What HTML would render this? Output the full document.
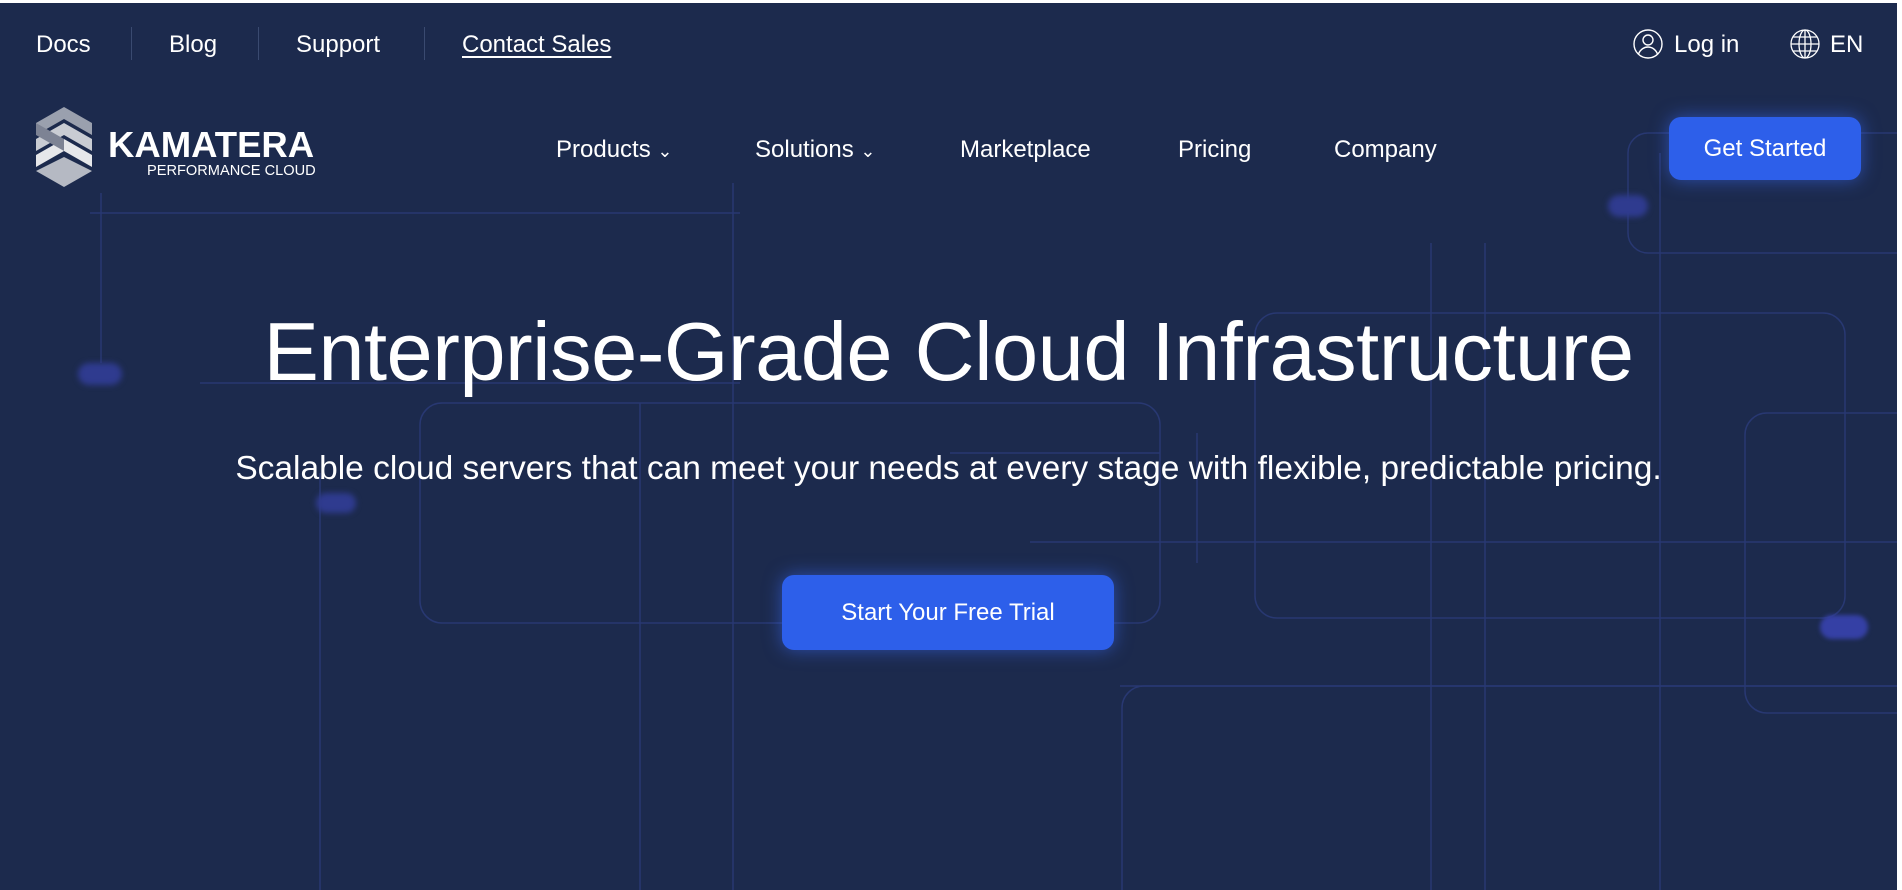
<!DOCTYPE html>
<html><head><meta charset="utf-8"><style>
html,body{margin:0;padding:0;overflow:hidden;width:1902px;height:890px;}
body{background:#fff;font-family:"Liberation Sans",sans-serif;color:#fff;position:relative;}
#bg{position:absolute;left:0;top:3px;width:1897px;height:887px;background:#1c2a4d;overflow:hidden;}
.a{position:absolute;white-space:nowrap;}
.top{font-size:24px;top:31px;}
.sep{position:absolute;top:27px;width:1px;height:33px;background:#3a4a70;}
.nav{font-size:24px;top:136px;}
.btn{position:absolute;background:#2d5fea;border-radius:12px;color:#fff;text-align:center;box-shadow:0 0 18px rgba(60,110,255,.55);}
</style></head><body>
<div id="bg">
<svg width="1897" height="887" style="position:absolute;left:0;top:0" fill="none" stroke="#2c3c7c" stroke-width="1.5" opacity=".8">
<path d="M101 190V360M733 180V887M1431 240V887M1485 240V887M1660 150V887M320 470V887M640 400V887"/>
<path d="M1030 539H1897M1120 683H1897M90 210H740M200 380H740"/>
<rect x="1255" y="310" width="590" height="305" rx="22"/>
<rect x="1745" y="410" width="240" height="300" rx="22"/>
<rect x="1122" y="683" width="900" height="400" rx="22"/>
<rect x="1628" y="130" width="300" height="120" rx="20"/>
<rect x="420" y="400" width="740" height="220" rx="22"/>
<path d="M1197 430V560M950 450H1160"/>
</svg>
<div style="position:absolute;left:78px;top:360px;width:44px;height:22px;border-radius:12px;background:#2f3b8f;filter:blur(3px)"></div>
<div style="position:absolute;left:316px;top:490px;width:40px;height:20px;border-radius:12px;background:#2f3b8f;filter:blur(3px)"></div>
<div style="position:absolute;left:1820px;top:612px;width:48px;height:24px;border-radius:12px;background:#3540a5;filter:blur(2px)"></div>
<div style="position:absolute;left:1608px;top:192px;width:40px;height:22px;border-radius:12px;background:#2f3b8f;filter:blur(3px)"></div>
</div>

<div class="a top" style="left:36px">Docs</div>
<div class="sep" style="left:131px"></div>
<div class="a top" style="left:169px">Blog</div>
<div class="sep" style="left:258px"></div>
<div class="a top" style="left:296px">Support</div>
<div class="sep" style="left:424px"></div>
<div class="a top" style="left:462px;text-decoration:underline;text-underline-offset:4px">Contact Sales</div>

<svg class="a" style="left:1633px;top:29px" width="30" height="30" viewBox="0 0 30 30" fill="none" stroke="#fff" stroke-width="1.4"><circle cx="15" cy="15" r="14"/><circle cx="15" cy="11" r="5"/><path d="M5.5 25c2-5 6-7 9.5-7s7.5 2 9.5 7"/></svg>
<div class="a top" style="left:1674px">Log in</div>
<svg class="a" style="left:1790px;top:29px" width="30" height="30" viewBox="0 0 30 30" fill="none" stroke="#fff" stroke-width="1.3"><circle cx="15" cy="15" r="14"/><ellipse cx="15" cy="15" rx="6" ry="14"/><path d="M15 1V29M1 15H29M3.5 8H26.5M3.5 22H26.5"/></svg>
<div class="a top" style="left:1830px">EN</div>

<svg class="a" style="left:36px;top:107px" width="56" height="80" viewBox="0 0 56 80">
<polygon points="28,0 56,16 56,28 28,12 0,28 0,16" fill="#9aa0ae"/>
<polygon points="28,16 56,32 56,44 28,28 0,44 0,32" fill="#c9ccd3"/>
<polygon points="28,32 56,48 56,60 28,44 0,60 0,48" fill="#e6e7ea"/>
<polygon points="28,50 56,64 28,80 0,64" fill="#b5b9c3"/>
<polygon points="0,16 28,32 28,44 0,28" fill="#7d8394"/>
</svg>
<div class="a" style="left:108px;top:124px;font-size:36.5px;font-weight:bold">KAMATERA</div>
<div class="a" style="left:147px;top:163px;font-size:14.6px">PERFORMANCE CLOUD</div>

<div class="a nav" style="left:556px">Products <span style="font-size:18px">&#8964;</span></div>
<div class="a nav" style="left:755px">Solutions <span style="font-size:18px">&#8964;</span></div>
<div class="a nav" style="left:960px">Marketplace</div>
<div class="a nav" style="left:1178px">Pricing</div>
<div class="a nav" style="left:1334px">Company</div>
<div class="btn" style="left:1669px;top:117px;width:192px;height:63px;line-height:63px;font-size:24px">Get Started</div>

<div class="a" style="left:0;width:1897px;text-align:center;top:304px;font-size:83px;letter-spacing:-0.5px">Enterprise-Grade Cloud Infrastructure</div>
<div class="a" style="left:0;width:1897px;text-align:center;top:450px;font-size:33.5px">Scalable cloud servers that can meet your needs at every stage with flexible, predictable pricing.</div>
<div class="btn" style="left:782px;top:575px;width:332px;height:75px;line-height:75px;font-size:24px">Start Your Free Trial</div>
</body></html>
